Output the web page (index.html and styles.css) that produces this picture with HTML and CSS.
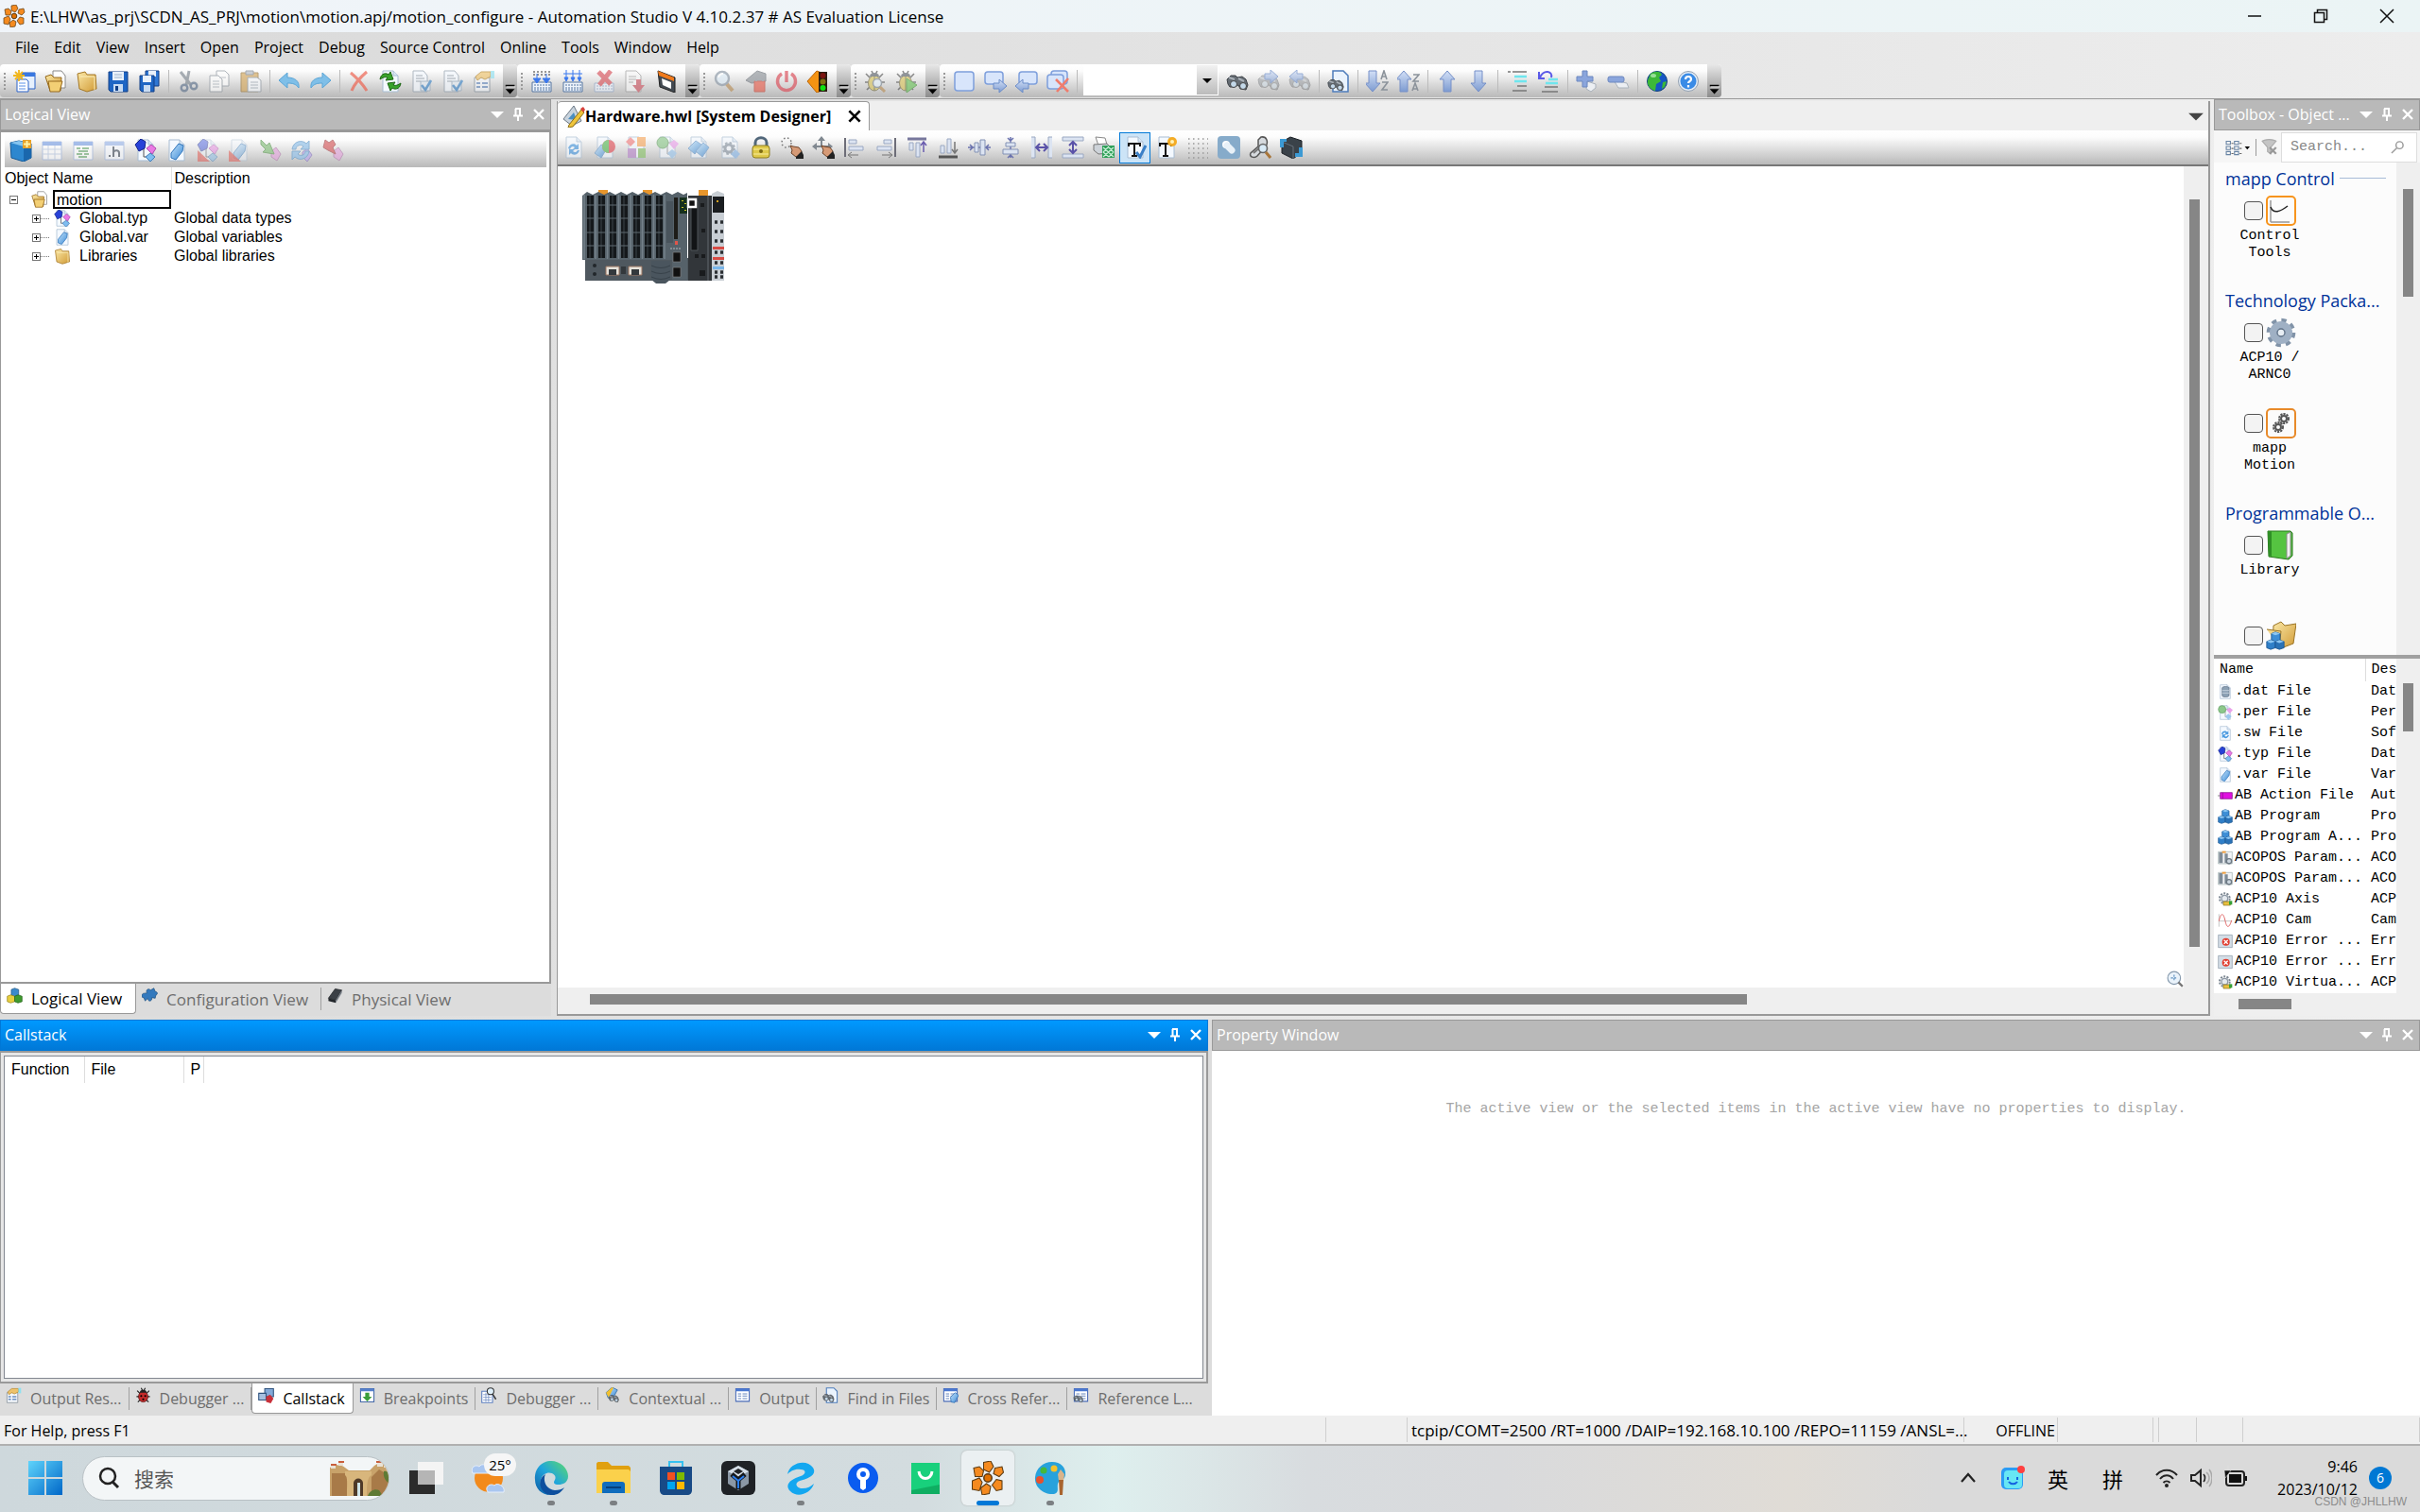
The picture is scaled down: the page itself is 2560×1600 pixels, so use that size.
FILE: index.html
```html
<!DOCTYPE html>
<html lang="en">
<head>
    <meta charset="UTF-8">
    <meta name="viewport" content="width=device-width, initial-scale=1.0">
    <title>motion - Automation Studio</title>
    <link rel="stylesheet" href="styles.css">
</head>
<body>
    <!-- Icon sprite -->
    <svg class="sprite" aria-hidden="true">
        <defs>
            <linearGradient id="gFolder" x1="0" y1="0" x2="1" y2="1"><stop offset="0" stop-color="#fbe9a8"/><stop offset="1" stop-color="#d19a35"/></linearGradient>
            <linearGradient id="gBlue" x1="0" y1="0" x2="1" y2="1"><stop offset="0" stop-color="#c5e4fb"/><stop offset="1" stop-color="#3b8ad6"/></linearGradient>
            <linearGradient id="gSteel" x1="0" y1="0" x2="0" y2="1"><stop offset="0" stop-color="#d3e0f7"/><stop offset="1" stop-color="#7d9bd0"/></linearGradient>
            <linearGradient id="gWin" x1="0" y1="0" x2="1" y2="1"><stop offset="0" stop-color="#5fd4fb"/><stop offset="1" stop-color="#0067c8"/></linearGradient>
            <linearGradient id="gEdge" x1="0" y1="1" x2="1" y2="0"><stop offset="0" stop-color="#0c59a4"/><stop offset=".5" stop-color="#1fa5dc"/><stop offset="1" stop-color="#5fdc6a"/></linearGradient>
        </defs>
        <symbol id="logo" viewBox="0 0 24 24">
            <g fill="#f58a1f" stroke="#5a3a12" stroke-width=".7"><path d="M9 1l5-1 2 4-3 4-4-2zM17 5l5-1 1 4-3 3-4-2zM18 13l4 1v6l-4 1-3-4zM11 16l3 2-1 5-5 1-1-5zM1 14l5-2 2 3-2 6-5-1zM2 5l4-1 3 3-1 4-5 0z"/></g>
            <circle cx="12" cy="12" r="2.800" fill="#e07000" stroke="#5a3a12"/>
        </symbol>
        <symbol id="page" viewBox="0 0 24 24"><path d="M4 1h11l5 5v17H4z" fill="#f4f9ff" stroke="#a9bdd2"/><path d="M15 1v5h5" fill="#dbe8f5" stroke="#a9bdd2"/></symbol>
        <symbol id="new" viewBox="0 0 24 24"><path d="M9 3h14v17H9z" fill="#e6f0fd" stroke="#2a62c8"/><path d="M9 3h14v4H9z" fill="#3a78e0"/><path d="M4 10h10l2 2v11H4z" fill="#fff" stroke="#2a62c8"/><path d="M6 14h7M6 17h7M6 20h7" stroke="#5b91e8"/><path d="M6 0v12M0 6h12M2 2l8 8M10 2l-8 8" stroke="#f1b61b" stroke-width="1.8"/></symbol>
        <symbol id="open" viewBox="0 0 24 24"><path d="M9 1h9l4 5v13H9z" fill="#fff" stroke="#888"/><path d="M1 7l6-2 3 3h8l-1 14H6z" fill="url(#gFolder)" stroke="#96681c"/><path d="M4 12h15l-3 11H6z" fill="#f3cf74" stroke="#96681c"/></symbol>
        <symbol id="folder" viewBox="0 0 24 24"><path d="M2 4l8-2 2 3 9 0 1 15-10 3-8-3z" fill="url(#gFolder)" stroke="#a57724"/><path d="M5 7h15v14" fill="none" stroke="#fbeebb"/></symbol>
        <symbol id="save" viewBox="0 0 24 24"><path d="M2 2h20v21H4l-2-2z" fill="#1f66c4" stroke="#123f86"/><path d="M6 2h12v9H6z" fill="#e9f1fa"/><path d="M8 5h8M8 8h8" stroke="#9fb4cc"/><path d="M7 15h10v8H7z" fill="#c9dcf2"/><path d="M9 17h3v5H9z" fill="#123f86"/></symbol>
        <symbol id="saveall" viewBox="0 0 24 24"><path d="M8 1h14v16H8z" fill="#2f77d4" stroke="#123f86"/><path d="M11 1h8v6h-8z" fill="#e9f1fa"/><path d="M2 6h15v17H4l-2-2z" fill="#1f66c4" stroke="#123f86"/><path d="M5 6h9v7H5z" fill="#e9f1fa"/><path d="M6 16h7v7H6z" fill="#c9dcf2"/></symbol>
        <symbol id="cut" viewBox="0 0 24 24"><path d="M4 2l11 14M13 1l-3 15" stroke="#7e8790" stroke-width="3"/><g fill="none" stroke="#5d718c" stroke-width="2.4"><circle cx="8" cy="19" r="3.3"/><circle cx="18" cy="17" r="3.3"/></g></symbol>
        <symbol id="copy" viewBox="0 0 24 24"><path d="M9 1h9l4 4v12H9z" fill="#fff" stroke="#8a939c"/><path d="M2 6h9l4 4v13H2z" fill="#fff" stroke="#8a939c"/><path d="M5 12h7M5 15h7M5 18h7M12 8h7" stroke="#a5adb6"/></symbol>
        <symbol id="paste" viewBox="0 0 24 24"><path d="M2 3h18v20H2z" fill="#d5a85c" stroke="#98763a"/><path d="M7 1h8v4H7z" fill="#b4bac2" stroke="#7a828c"/><path d="M9 8h10l4 3v12H9z" fill="#f7fafd" stroke="#8a939c"/><path d="M12 13h8M12 16h8M12 19h8" stroke="#9aa5b0"/></symbol>
        <symbol id="undo" viewBox="0 0 24 24"><path d="M1 11l9-8v5c8 0 13 4 12 11-3-4-6-5-12-5v5z" fill="#7fbfe8" stroke="#5aa5d6"/></symbol>
        <symbol id="redo" viewBox="0 0 24 24"><path d="M23 11l-9-8v5C6 8 1 12 2 19c3-4 6-5 12-5v5z" fill="#7fbfe8" stroke="#5aa5d6"/></symbol>
        <symbol id="delete" viewBox="0 0 24 24"><path d="M3 3c6 5 12 11 17 19M20 2C13 8 7 14 4 22" fill="none" stroke="#ee5a46" stroke-width="3"/></symbol>
        <symbol id="reload" viewBox="0 0 24 24"><use href="#page"/><path d="M1 10C2 3 8 3 10 5l2-3 3 8-8 1 2-3c-3-1-5 0-8 2z" fill="#38a32b" stroke="#1c6413"/><path d="M23 14c-1 7-7 7-9 5l-2 3-3-8 8-1-2 3c3 1 5 0 8-2z" fill="#38a32b" stroke="#1c6413"/></symbol>
        <symbol id="check" viewBox="0 0 24 24"><path d="M3 1h11l4 5v17H3z" fill="#f4f9ff" stroke="#8a98a6"/><path d="M6 6h7M6 9h9M6 12h5" stroke="#7f8a95"/><path d="M11 12h10v10H11z" fill="#e3ebf3" stroke="#8fa4b8"/><path d="M12 16l4 5 6-10" fill="none" stroke="#3f86c6" stroke-width="2.6"/></symbol>
        <symbol id="props" viewBox="0 0 24 24"><path d="M2 8h16v15H2z" fill="#f3f6fa" stroke="#7d8894"/><path d="M4 14h4M10 14h6M4 18h4M10 18h6" stroke="#6a8ec0" stroke-width="2"/><path d="M3 7l6-5h10v5l-6 3-4-2-4 3z" fill="#edc26b" stroke="#b58629"/><path d="M19 1h4v8h-4z" fill="#8fe0f0"/></symbol>
        <symbol id="build" viewBox="0 0 24 24"><path d="M2 13h20v10H2z" fill="#eef4fc" stroke="#54749f"/><path d="M4 16h17M4 19h17M4 21h17" stroke="#54749f" stroke-dasharray="2 1"/><path d="M3 2h18M3 5h18" stroke="#333" stroke-dasharray="2 2"/><path d="M7 4v7M17 4v7M3 9l4 5 4-5zM13 9l4 5 4-5z" fill="#3b78ee" stroke="#3b78ee"/></symbol>
        <symbol id="rebuild" viewBox="0 0 24 24"><path d="M2 13h20v10H2z" fill="#eef4fc" stroke="#54749f"/><path d="M4 16h17M4 19h17M4 21h17" stroke="#54749f" stroke-dasharray="2 1"/><path d="M2 4h20M5 0v10M12 0v10M19 0v10M3 8l2 4 2-4zM10 8l2 4 2-4zM17 8l2 4 2-4z" fill="#3b78ee" stroke="#3b78ee"/></symbol>
        <symbol id="stopbuild" viewBox="0 0 24 24"><path d="M2 14h20v9H2z" fill="#eef4fc" stroke="#8fa4c4"/><path d="M4 17h17M4 20h17" stroke="#8fa4c4" stroke-dasharray="2 1"/><path d="M6 2l13 13M19 1L7 16" stroke="#d8535c" stroke-width="5"/></symbol>
        <symbol id="transfer" viewBox="0 0 24 24"><path d="M2 1h11l5 5v17H2z" fill="#f7f7f7" stroke="#999"/><path d="M5 7h8M5 10h8M5 13h5" stroke="#999"/><path d="M13 10h5v6h4l-6.500 8L9 16h4z" fill="#cd5a66"/></symbol>
        <symbol id="panel" viewBox="0 0 24 24"><path d="M3 1l18 7v16L5 18z" fill="#434a52" stroke="#222"/><path d="M3 1l17 7v4L4 6z" fill="#f07a1c"/><path d="M7 9l10 4v7L8 16z" fill="#fff"/></symbol>
        <symbol id="magnify" viewBox="0 0 24 24"><path d="M14 14l7 8" stroke="#b9905a" stroke-width="4"/><circle cx="10" cy="9" r="7" fill="#dcebf6" stroke="#8a97a5" stroke-width="2.4"/><path d="M6 8a5 5 0 0 1 5-4" fill="none" stroke="#fff" stroke-width="2"/></symbol>
        <symbol id="unlock" viewBox="0 0 24 24"><path d="M2 11L14 1l9 3v8L8 14z" fill="#8e949a" stroke="#6c727a"/><path d="M11 12h11v11H11z" fill="#e8604f" stroke="#c2483b"/><path d="M13 12V9c0-4 7-4 7 0v3" fill="none" stroke="#8d9299" stroke-width="2"/></symbol>
        <symbol id="power" viewBox="0 0 24 24"><path d="M7 4a9.500 9.500 0 1 0 10 0" fill="none" stroke="#db4a56" stroke-width="3.400"/><path d="M12 1v12" stroke="#db4a56" stroke-width="3.400"/></symbol>
        <symbol id="traffic" viewBox="0 0 24 24"><path d="M1 12L11 1l5 2v19l-5 2z" fill="#f59312" stroke="#b9650a"/><path d="M13 2h9v21h-9z" fill="#2b1c10"/><circle cx="17.500" cy="6" r="3" fill="#7b1410"/><circle cx="17.500" cy="12.500" r="3" fill="#847410"/><circle cx="17.500" cy="19" r="3" fill="#12e212"/></symbol>
        <symbol id="bug" viewBox="0 0 24 24"><path d="M2 4l5 5M20 4l-5 5M1 13h21M3 21l5-5M19 21l-5-5M8 1l2 4M14 1l-2 4" stroke="#555" stroke-width="1.600"/><ellipse cx="11" cy="14" rx="6.500" ry="8" fill="#d9c560" stroke="#77704a"/><path d="M6 7a5 4 0 0 1 10 0z" fill="#5b6269"/><path d="M11 7v15" stroke="#6b6a45"/></symbol>
        <symbol id="bugfind" viewBox="0 0 24 24"><use href="#bug"/><circle cx="14" cy="14" r="4.500" fill="#e2eff8" stroke="#7f8a94" stroke-width="1.500"/><path d="M17 18l5 5" stroke="#b9905a" stroke-width="3"/></symbol>
        <symbol id="bugrun" viewBox="0 0 24 24"><use href="#bug"/><path d="M12 9l11 7-11 8z" fill="#6ec45e" stroke="#4c9a40"/></symbol>
        <symbol id="bm" viewBox="0 0 24 24"><rect x="2" y="2" width="20" height="20" rx="3" fill="#d8e5fb" stroke="#7e9fdc" stroke-width="1.500"/></symbol>
        <symbol id="bmnext" viewBox="0 0 24 24"><rect x="1" y="2" width="19" height="13" rx="3" fill="#d8e5fb" stroke="#7e9fdc" stroke-width="1.500"/><path d="M10 14h6v-4l8 7-8 7v-4h-6z" fill="url(#gSteel)" stroke="#6b8cc8"/></symbol>
        <symbol id="bmprev" viewBox="0 0 24 24"><rect x="4" y="2" width="19" height="13" rx="3" fill="#d8e5fb" stroke="#7e9fdc" stroke-width="1.500"/><path d="M14 14H8v-4l-8 7 8 7v-4h6z" fill="url(#gSteel)" stroke="#6b8cc8"/></symbol>
        <symbol id="bmclear" viewBox="0 0 24 24"><rect x="5" y="1" width="17" height="14" rx="3" fill="#d8e5fb" stroke="#7e9fdc" stroke-width="1.500"/><rect x="1" y="5" width="17" height="15" rx="3" fill="#d8e5fb" stroke="#7e9fdc" stroke-width="1.500"/><path d="M10 10l13 13M23 9L11 23" stroke="#f07c6c" stroke-width="2.600"/></symbol>
        <symbol id="bino" viewBox="0 0 24 24"><path d="M1 10l4-4 5 0 2 2 5-1 4 3 2 6-2 5-6-1-2-4-4 2-5 0-2-3z" fill="#666d74" stroke="#3c4147"/><path d="M3 8l6 2M13 9l6 3" stroke="#aab1b8" stroke-width="2"/><circle cx="8" cy="15" r="3.500" fill="#c4d9ea" stroke="#444"/><circle cx="18" cy="17" r="3.500" fill="#c4d9ea" stroke="#444"/></symbol>
        <symbol id="binonext" viewBox="0 0 24 24"><use href="#bino" opacity=".5"/><path d="M8 4h6V0l8 7-8 7v-4H8z" fill="url(#gSteel)" stroke="#6b8cc8"/></symbol>
        <symbol id="binoprev" viewBox="0 0 24 24"><use href="#bino" opacity=".5"/><path d="M15 4H9V0L1 7l8 7v-4h6z" fill="url(#gSteel)" stroke="#6b8cc8"/></symbol>
        <symbol id="binopage" viewBox="0 0 24 24"><path d="M6 1h11l5 5v17H6z" fill="#eaf3fd" stroke="#4e7cba" stroke-width="1.500"/><use href="#bino" x="0" y="6" width="18" height="18"/></symbol>
        <symbol id="up" viewBox="0 0 24 24"><path d="M12 1l8 9h-4v13H8V10H4z" fill="url(#gSteel)" stroke="#7690c8"/></symbol>
        <symbol id="down" viewBox="0 0 24 24"><path d="M12 23l8-9h-4V1H8v13H4z" fill="url(#gSteel)" stroke="#7690c8"/></symbol>
        <symbol id="sortdown" viewBox="0 0 24 24"><use href="#down" x="-5"/><path d="M16 10l3-9 3 9M17 7h4M17 13h6l-6 8h6" fill="none" stroke="#8b929a" stroke-width="1.600"/></symbol>
        <symbol id="sortup" viewBox="0 0 24 24"><use href="#up" x="-5"/><path d="M16 22l3-8 3 8M17 20h4M17 5h6l-6 7h6" fill="none" stroke="#8b929a" stroke-width="1.600"/></symbol>
        <symbol id="indent" viewBox="0 0 24 24"><path d="M2 2h3M7 2h15M12 17h10M7 22h15" stroke="#777" stroke-width="1.600"/><path d="M9 7h13M9 12h13" stroke="#6fe6ee" stroke-width="2.400"/></symbol>
        <symbol id="outdent" viewBox="0 0 24 24"><path d="M8 18h14M5 23h17" stroke="#777" stroke-width="1.600"/><path d="M12 10h10M9 14h13" stroke="#6fe6ee" stroke-width="2.400"/><path d="M2 2v7h6M3 8c4-9 14-7 12 0" fill="none" stroke="#5a5ae8" stroke-width="2"/></symbol>
        <symbol id="plus" viewBox="0 0 24 24"><path d="M12 12l9 3v4l-5 4-5-3z" fill="#eceff3" stroke="#aab2bb"/><path d="M7 1h5v6h6v5h-6v6H7v-6H1V7h6z" fill="#8aa5dc" stroke="#6d88c0"/></symbol>
        <symbol id="minus" viewBox="0 0 24 24"><path d="M7 11l14 3 2 5H12z" fill="#eceff3" stroke="#aab2bb"/><rect x="1" y="7" width="17" height="6" rx="2" fill="#8aa5dc" stroke="#6d88c0"/></symbol>
        <symbol id="globe" viewBox="0 0 24 24"><circle cx="12" cy="12" r="10.500" fill="#1556c4" stroke="#123f7c"/><path d="M5 4c5-3 10-3 12 1l-3 3 2 4-5 3-1 7c-5-1-9-6-8-11zM18 13l4-1-2 6-3 2z" fill="#3cb838"/><ellipse cx="8" cy="6" rx="3" ry="2" fill="#bff0c0" opacity=".7"/></symbol>
        <symbol id="help" viewBox="0 0 24 24"><circle cx="12" cy="12" r="10.500" fill="#e4ecf5" stroke="#93a1b2"/><circle cx="12" cy="12" r="8.500" fill="#3a8be6"/><path d="M9 10c0-4 6-4 6 0 0 2-3 2-3 4M12 16v2.500" fill="none" stroke="#fff" stroke-width="2.200"/></symbol>
        <symbol id="cube" viewBox="0 0 24 24"><path d="M1 4l9-2 13 3v15l-8 4L2 20z" fill="#2d87cf" stroke="#175a96"/><path d="M15 8v16l8-4V5z" fill="#1a67ad"/><path d="M1 4l9-2 13 3-8 3z" fill="#85c4ef"/><path d="M14 1h9v9h-9z" fill="#e8a22a"/><path d="M18.500 2v7M15 5.500h7" stroke="#fff3a8" stroke-width="2"/></symbol>
        <symbol id="table" viewBox="0 0 24 24"><path d="M2 3h20v19H2z" fill="#fff" stroke="#9db3dc"/><path d="M2 3h20v4H2z" fill="#7ba0e4"/><path d="M2 11h20M2 16h20M8 7v15M15 7v15" stroke="#b9c9e4"/></symbol>
        <symbol id="tablecode" viewBox="0 0 24 24"><path d="M2 3h20v19H2z" fill="#fff" stroke="#9db3dc"/><path d="M2 3h20v4H2z" fill="#7ba0e4"/><path d="M5 10h4M11 10h7M7 13h10M5 16h6M13 16h5M7 19h9" stroke="#4e9a54" stroke-width="1.600"/></symbol>
        <symbol id="header" viewBox="0 0 24 24"><path d="M2 3h20v19H2z" fill="#f7faff" stroke="#9db3dc"/><path d="M2 3h20v4H2z" fill="#9bb6e8"/><path d="M6 18h2M11 8v11M11 14c2-3 6-2 6 1v4" fill="none" stroke="#4a5360" stroke-width="2"/></symbol>
        <symbol id="types" viewBox="0 0 24 24"><use href="#page"/><path d="M10 7v12h6" fill="none" stroke="#555"/><path d="M1 6l6-6 5 3-1 7-6 3z" fill="#2842d8" stroke="#16258c"/><path d="M13 10l5-4 5 4-4 6z" fill="#ea7ae4" stroke="#b14cb0"/><path d="M12 19l5-4 5 4-5 5z" fill="#7fbdf0" stroke="#447fb8"/></symbol>
        <symbol id="var" viewBox="0 0 24 24"><use href="#page"/><path d="M6 15l8-10 5 2-1 6-7 9-5-2z" fill="url(#gBlue)" stroke="#2f74ba"/></symbol>
        <symbol id="typesred" viewBox="0 0 24 24"><use href="#types" opacity=".65"/><path d="M1 12l13 12H1z" fill="#e2574f" opacity=".8"/></symbol>
        <symbol id="varred" viewBox="0 0 24 24"><use href="#var" opacity=".65"/><path d="M1 12l13 12H1z" fill="#e2574f" opacity=".8"/></symbol>
        <symbol id="import" viewBox="0 0 24 24"><path d="M13 13l5-4 5 7-4 7-6-4z" fill="#e3a6dc" stroke="#b583b0"/><path d="M2 1l6 6 3-3 5 12-12-2 3-3-5-5z" fill="#86c07c" stroke="#5f9a56"/></symbol>
        <symbol id="sync" viewBox="0 0 24 24"><path d="M13 14l5-4 5 7-5 7-5-5z" fill="#b9a6ea" stroke="#8b7cc0"/><path d="M2 11C3 3 12 0 17 5l3-3v9h-9l3-3C11 5 6 7 6 11zM20 13c-1 8-10 11-15 6l-3 3v-9h9l-3 3c3 3 8 1 8-3z" fill="#8fc0ea" stroke="#629aca"/></symbol>
        <symbol id="export" viewBox="0 0 24 24"><path d="M13 13l5-4 5 7-4 7-6-4z" fill="#e3a6dc" stroke="#b583b0"/><path d="M2 9L4 1l4 3 4-3 3 5-3 3 3 7-8-4z" fill="#d6595c" stroke="#a84a4e"/></symbol>
        <symbol id="syncpage" viewBox="0 0 24 24"><use href="#page"/><path d="M6 13c1-5 7-6 9-3l2-2v6h-6l2-2c-2-2-4-1-5 2zM18 15c-1 5-7 6-9 3l-2 2v-6h6l-2 2c2 2 4 1 5-1z" fill="#4d9be0"/></symbol>
        <symbol id="ballpage" viewBox="0 0 24 24"><use href="#page"/><path d="M1 18l7-9 6 4-6 10z" fill="url(#gBlue)" stroke="#6d9ccc"/><circle cx="16" cy="11" r="7" fill="#e0525a"/><path d="M16 4a7 7 0 0 0 0 14z" fill="#5cba58"/></symbol>
        <symbol id="blocks" viewBox="0 0 24 24"><use href="#page"/><path d="M1 6l5-5 5 5-5 5z" fill="#f08080"/><path d="M13 1h9v10h-9z" fill="#f6a860"/><path d="M3 13h9v10H3z" fill="#b98acb"/><path d="M14 13h8v10h-8z" fill="#8cc36c"/></symbol>
        <symbol id="netpage" viewBox="0 0 24 24"><use href="#page"/><path d="M9 7h9M12 7v12h5" fill="none" stroke="#888"/><circle cx="7" cy="7" r="6" fill="#8cc78a" stroke="#6aa368"/><path d="M14 8l5-4 5 4-5 6z" fill="#e9a2ea"/><path d="M12 18l5-4 5 4-5 6z" fill="#9ec8ee"/></symbol>
        <symbol id="diamonds" viewBox="0 0 24 24"><use href="#page"/><path d="M1 13l8-8 6 4-7 10z" fill="url(#gBlue)" stroke="#6d9ccc"/><path d="M9 16l8-9 6 5-7 10z" fill="url(#gBlue)" stroke="#6d9ccc"/></symbol>
        <symbol id="gearpage" viewBox="0 0 24 24"><use href="#page"/><circle cx="11" cy="13" r="4" fill="none" stroke="#8d99a6" stroke-width="3"/><circle cx="11" cy="13" r="6" fill="none" stroke="#8d99a6" stroke-width="2" stroke-dasharray="2.500 2.200"/><path d="M13 19l5-5 5 5-5 5z" fill="#8db9e8"/></symbol>
        <symbol id="lock" viewBox="0 0 24 24"><path d="M6 12V7c0-7 12-7 12 0v5" fill="none" stroke="#51677a" stroke-width="3"/><rect x="3" y="10" width="18" height="13" rx="3" fill="#dfc94a" stroke="#8e7d20"/><path d="M4 14h16M4 19h16" stroke="#f7eca0"/><circle cx="12" cy="16" r="2" fill="#7c6a14"/></symbol>
        <symbol id="hand" viewBox="0 0 24 24"><path d="M10 10l3 1 6 1 3 4-1 5-5 1-5-4 1-3z" fill="#d69a76" stroke="#6e4429"/><path d="M16 22l6-6 2 4v4h-8z" fill="#222"/></symbol>
        <symbol id="select" viewBox="0 0 24 24"><circle cx="6" cy="7" r="5" fill="none" stroke="#777" stroke-dasharray="1.500 2.500" stroke-width="1.500"/><use href="#hand"/></symbol>
        <symbol id="move" viewBox="0 0 24 24"><path d="M10 0l4 5h-3v5h6V7l5 4-5 4v-3H5v3L0 11l5-4v3h4V5H6z" fill="#808890"/><use href="#hand"/></symbol>
        <symbol id="alleft" viewBox="0 0 24 24"><path d="M2 2v20" stroke="#6d6d78" stroke-width="2"/><path d="M6 4h8v4H6zM6 11h15v4H6z" fill="#dce4f2" stroke="#9aa8c2"/><path d="M16 20H6M9 17l-4 3 4 3" fill="none" stroke="#777"/></symbol>
        <symbol id="alright" viewBox="0 0 24 24"><path d="M22 2v20" stroke="#6d6d78" stroke-width="2"/><path d="M10 4h8v4h-8zM3 11h15v4H3z" fill="#dce4f2" stroke="#9aa8c2"/><path d="M8 20h10M15 17l4 3-4 3" fill="none" stroke="#777"/></symbol>
        <symbol id="altop" viewBox="0 0 24 24"><path d="M2 3h20" stroke="#77779c" stroke-width="3"/><path d="M4 7h4v8H4zM11 7h4v15h-4z" fill="#dce4f2" stroke="#9aa8c2"/><path d="M19 17V7M16 10l3-4 3 4" fill="none" stroke="#6a5cae" stroke-width="1.500"/></symbol>
        <symbol id="albottom" viewBox="0 0 24 24"><path d="M2 22h20" stroke="#555" stroke-width="3"/><path d="M4 10h4v8H4zM11 3h4v15h-4z" fill="#dce4f2" stroke="#9aa8c2"/><path d="M19 6v11M16 14l3 4 3-4" fill="none" stroke="#777" stroke-width="1.500"/></symbol>
        <symbol id="cenh" viewBox="0 0 24 24"><path d="M0 12h24M2 9l3 3-3 3M22 9l-3 3 3 3" fill="none" stroke="#6a72ae" stroke-width="1.500"/><path d="M7 7h4v10H7zM13 4h5v16h-5z" fill="#dce4f2" stroke="#8291b4"/></symbol>
        <symbol id="cenv" viewBox="0 0 24 24"><path d="M12 1v22M9 2l3 3 3-3M9 23l3-3 3 3" fill="none" stroke="#6a72ae" stroke-width="1.500"/><path d="M7 7h10v4H7zM4 14h16v5H4z" fill="#dce4f2" stroke="#8291b4"/></symbol>
        <symbol id="spaceh" viewBox="0 0 24 24"><path d="M1 1h4v22H1M23 1h-4v22h4" fill="#dce4f2" stroke="#9aa8c2"/><path d="M7 12h10M10 8l-4 4 4 4M14 8l4 4-4 4" fill="none" stroke="#5a52a8" stroke-width="2"/></symbol>
        <symbol id="spacev" viewBox="0 0 24 24"><path d="M1 1h22v4H1zM1 19h22v4H1z" fill="#dce4f2" stroke="#9aa8c2"/><path d="M12 7v10M8 10l4-4 4 4M8 14l4 4 4-4" fill="none" stroke="#5a52a8" stroke-width="2"/></symbol>
        <symbol id="print" viewBox="0 0 24 24"><path d="M3 1l10 1 2 7-9 1z" fill="#fff" stroke="#888"/><path d="M1 9l14-1 3 3v7l-12 1-5-4z" fill="#cdd3d9" stroke="#777"/><path d="M10 10h13v13H10z" fill="#2f9f58"/><path d="M11 12l11 10M11 17l6 5M16 11l6 6M22 12L11 22M17 11l-6 6M22 17l-5 5" stroke="#c8efd6" stroke-width="1.200"/></symbol>
        <symbol id="textcheck" viewBox="0 0 24 24"><use href="#page"/><path d="M4 7h14v4h-2V9h-4v11h2v2H8v-2h2V9H6v2H4z" fill="#111"/><path d="M13 17l4 5 6-12" fill="none" stroke="#3a80c8" stroke-width="3"/></symbol>
        <symbol id="textnew" viewBox="0 0 24 24"><use href="#page"/><path d="M4 7h14v4h-2V9h-4v11h2v2H8v-2h2V9H6v2H4z" fill="#111"/><circle cx="18" cy="6" r="5" fill="#f4ac25"/><circle cx="18" cy="6" r="2" fill="#fff3b8"/></symbol>
        <symbol id="gridd" viewBox="0 0 24 24"><path d="M2 3h21M2 8h21M2 13h21M2 18h21M2 23h21" stroke="#999" stroke-width="1.500" stroke-dasharray="1.500 3.500"/></symbol>
        <symbol id="clip" viewBox="0 0 24 24"><rect width="24" height="24" rx="4" fill="#86abca"/><circle cx="9" cy="9" r="4" fill="#fff"/><path d="M10 10l5 5" stroke="#e8f1f8" stroke-width="7" stroke-linecap="round"/></symbol>
        <symbol id="findgear" viewBox="0 0 24 24"><path d="M13 1c6-1 8 5 5 10L9 21c-3 3-9 1-7-3l8-7V4z" fill="#d6dade" stroke="#555" stroke-width="1.500"/><path d="M5 18l9-8" stroke="#777" stroke-width="2"/><circle cx="15" cy="13" r="4.500" fill="#d8eaf6" stroke="#666" stroke-width="1.600"/><path d="M18 17l5 6" stroke="#a9763a" stroke-width="3"/></symbol>
        <symbol id="hw" viewBox="0 0 24 24"><path d="M2 6l9-5 12 4v12l-9 7L2 18z" fill="#3a4249" stroke="#1c2126"/><path d="M2 6l12 5v13" fill="none" stroke="#66717b"/><path d="M0 3h7v3H4v6H0zM24 22h-8v-4h4v-6h4z" fill="#3c9ad4"/></symbol>
        <symbol id="designer" viewBox="0 0 24 24"><path d="M1 15L12 1l8 16-10 5z" fill="#c9d4de" stroke="#6b7784"/><path d="M6 15l6-7 3 8z" fill="#4b8ec0"/><path d="M7 21L20 5l3 3L11 23l-5 1z" fill="#efc53c" stroke="#8d6f17"/><path d="M19 4l3-2 2 3-2 3z" fill="#d8423c"/></symbol>
        <symbol id="cubes" viewBox="0 0 24 24"><path d="M7 3l5-2 6 2v8l-6 2-5-2z" fill="#3d8ed6" stroke="#1c5690"/><path d="M1 13l5-2 6 2v8l-6 2-5-2z" fill="#2f7fc8" stroke="#1c5690"/><path d="M12 13l5-2 6 2v8l-6 2-5-2z" fill="#2a72b6" stroke="#1c5690"/><path d="M7 3l5-2 6 2-6 2zM1 13l5-2 6 2-6 2zM12 13l5-2 6 2-6 2z" fill="#8cc6f2"/></symbol>
        <symbol id="cubes3" viewBox="0 0 24 24"><path d="M7 3l5-2 6 2v9l-6 2-5-2z" fill="#3a8acc" stroke="#22567f"/><path d="M1 13l5-2 6 2v8l-6 2-5-2z" fill="#e8cf3e" stroke="#94811c"/><path d="M12 13l5-2 6 2v8l-6 2-5-2z" fill="#3e9a2e" stroke="#24621a"/></symbol>
        <symbol id="puzzle" viewBox="0 0 24 24"><path d="M2 9l6-1c-3-4 2-8 5-4l5-3 2 5c4 0 4 5 1 5l-1 5-5-1c1 6-6 7-6 1l-4 4-2-5c-4 1-4-5-1-6z" fill="#3379bd" stroke="#1d4f80"/></symbol>
        <symbol id="chip" viewBox="0 0 24 24"><path d="M2 16L12 2l10 2-9 15z" fill="#3b4046" stroke="#1c1f22"/><path d="M2 16v4l11 3v-4z" fill="#22262a"/><path d="M13 23l9-15V4l-9 15z" fill="#777e86"/></symbol>
        <symbol id="gear" viewBox="0 0 24 24"><circle cx="12" cy="12" r="10" fill="none" stroke="#8193a8" stroke-width="3" stroke-dasharray="4 3.850"/><circle cx="12" cy="12" r="6" fill="none" stroke="#9fb0c4" stroke-width="6"/><circle cx="12" cy="12" r="3" fill="#e8eef4" stroke="#5e7086"/></symbol>
        <symbol id="curve" viewBox="0 0 32 32"><rect x="1" y="1" width="30" height="30" rx="4" fill="#fbfbfb" stroke="#f7941d" stroke-width="2"/><path d="M5 5v23M5 28h20" stroke="#999" stroke-width="1.500"/><path d="M5 12c3 8 10 5 18-1" fill="none" stroke="#222" stroke-width="1.500"/></symbol>
        <symbol id="motion" viewBox="0 0 32 32"><rect x="1" y="1" width="30" height="30" rx="4" fill="#fbfbfb" stroke="#e88a2a" stroke-width="2"/><g fill="none" stroke="#555"><circle cx="19" cy="11" r="5" stroke-width="2" stroke-dasharray="2.200 1"/><circle cx="19" cy="11" r="3" stroke-width="2"/><circle cx="13" cy="20" r="5" stroke-width="2" stroke-dasharray="2.200 1"/><circle cx="13" cy="20" r="3" stroke-width="2"/></g></symbol>
        <symbol id="book" viewBox="0 0 32 32"><path d="M2 1h24l2 2v24l-4 4-21-3z" fill="#55c441" stroke="#2a7a1e"/><path d="M2 1h4v27l-3-1z" fill="#2f8f26"/><path d="M22 4l4-2v25l-4 3z" fill="#f2f2f2" stroke="#888"/></symbol>
        <symbol id="foldercubes" viewBox="0 0 32 32"><path d="M8 5l8-4 4 4 12-2-3 21-13 5-9-3z" fill="url(#gFolder)" stroke="#9a7426"/><path d="M1 9l15 2-2 17" fill="#f3d588" stroke="#9a7426"/><use href="#cubes" x="0" y="11" width="20" height="20"/></symbol>
        <symbol id="db" viewBox="0 0 24 24"><use href="#page"/><path d="M7 6c0-3 11-3 11 0v12c0 3-11 3-11 0z" fill="#8ba0b4" stroke="#5d7084"/><path d="M7 10h11M7 14h11" stroke="#dde6ee"/></symbol>
        <symbol id="action" viewBox="0 0 24 24"><path d="M0 12h24" stroke="#555"/><path d="M4 7h19v10H4z" fill="#e010e0" stroke="#7a1080"/><path d="M8 7v10" stroke="#7a1080"/></symbol>
        <symbol id="acopos" viewBox="0 0 24 24"><path d="M1 2h22v19H1z" fill="#f2f4f6" stroke="#9aa"/><path d="M2 3h6v17H2zM11 5h5v15h-5z" fill="#7f8b96"/><path d="M7 1h6v3H7z" fill="#f0a040"/><circle cx="18" cy="17" r="4" fill="#ccd6df" stroke="#6c7883" stroke-width="2"/></symbol>
        <symbol id="axis" viewBox="0 0 24 24"><circle cx="11" cy="10" r="8" fill="none" stroke="#7c8792" stroke-width="3" stroke-dasharray="3 2"/><circle cx="11" cy="10" r="5" fill="#e5eaef" stroke="#8f9aa6" stroke-width="2"/><path d="M9 15h11v6H9z" fill="#e8c040" stroke="#8a7020"/><path d="M18 14h5v6h-5z" fill="#35a035"/></symbol>
        <symbol id="cam" viewBox="0 0 24 24"><path d="M2 2v20M2 13h21" stroke="#aaa"/><path d="M2 13c3-14 7-14 10 0s7 9 10-1" fill="none" stroke="#e06464" stroke-width="1.500"/></symbol>
        <symbol id="err" viewBox="0 0 24 24"><path d="M1 2h22v20H1z" fill="#d3dde6" stroke="#8796a5"/><circle cx="13" cy="13" r="6" fill="#e23b2c"/><path d="M10 10l6 6M16 10l-6 6" stroke="#fff" stroke-width="2"/></symbol>
        <symbol id="ladybug" viewBox="0 0 24 24"><path d="M3 5l5 5M21 5l-5 5M2 14h20M4 22l5-5M20 22l-5-5M9 1l2 4M15 1l-2 4" stroke="#222" stroke-width="1.600"/><ellipse cx="12" cy="14" rx="7" ry="8" fill="#c42a2a" stroke="#501010"/><path d="M7 8a5 4 0 0 1 10 0z" fill="#222"/><circle cx="9" cy="13" r="1.500"/><circle cx="15" cy="13" r="1.500"/><circle cx="12" cy="18" r="1.500"/></symbol>
        <symbol id="stack" viewBox="0 0 24 24"><path d="M10 2h13v12H10z" fill="#83a9d8" stroke="#31547f" stroke-width="1.500"/><path d="M1 9h11v10H1z" fill="#a6c0e0" stroke="#31547f" stroke-width="1.500"/><path d="M12 14l6-3 5 6-4 7-7-2z" fill="#c8303a"/></symbol>
        <symbol id="break" viewBox="0 0 24 24"><path d="M2 2h20v20H2z" fill="#fff" stroke="#4468a8" stroke-width="1.500"/><path d="M2 2h20v4H2z" fill="#5580cc"/><path d="M9 8h6v6h4l-7 7-7-7h4z" fill="#3a9e3a"/></symbol>
        <symbol id="watch" viewBox="0 0 24 24"><path d="M1 6h16v17H1z" fill="#fff" stroke="#5c7fc0" stroke-width="1.500"/><path d="M3 11h12M3 15h12M3 19h12M7 8v14M11 8v14" stroke="#6b8ac0"/><circle cx="14" cy="6" r="5" fill="#dff0fb" stroke="#333" stroke-width="1.500"/><path d="M17 10l5 8" stroke="#333" stroke-width="2"/></symbol>
        <symbol id="context" viewBox="0 0 24 24"><path d="M3 8l9-8 8 4-6 11-8 1z" fill="url(#gBlue)" stroke="#24619c"/><path d="M3 8l9-8 2 1-7 14z" fill="#f3c02e"/><use href="#bino" x="6" y="8" width="17" height="16"/></symbol>
        <symbol id="list" viewBox="0 0 24 24"><path d="M2 2h20v19H2z" fill="#fff" stroke="#4a6cb8" stroke-width="1.500"/><path d="M2 2h20v4H2z" fill="#4a78d0"/><path d="M5 10h5M12 10h7M5 13h5M12 13h7M5 17h5M12 17h7" stroke="#6b8ac0" stroke-width="1.500"/></symbol>
        <symbol id="listref" viewBox="0 0 24 24"><use href="#list"/><path d="M12 15l7-7 5 4-6 11-5-1z" fill="url(#gBlue)" stroke="#2468b0"/></symbol>
        <symbol id="listbino" viewBox="0 0 24 24"><use href="#list"/><use href="#bino" x="0" y="9" width="16" height="15"/></symbol>
        <symbol id="pin" viewBox="0 0 16 16"><path d="M5 2h6M5.500 2v7M10 2v7M3 9.500h10M8 10v5" fill="none" stroke="currentColor" stroke-width="2"/></symbol>
        <symbol id="x" viewBox="0 0 16 16"><path d="M3 3l10 10M13 3L3 13" stroke="currentColor" stroke-width="2.400"/></symbol>
        <symbol id="tri" viewBox="0 0 16 16"><path d="M1 5h14l-7 7z" fill="currentColor"/></symbol>
        <symbol id="more" viewBox="0 0 16 16"><path d="M2 2h11v2H2zM2 7h11l-5.500 6z" fill="#000"/><path d="M3 4.500h11" stroke="#fff"/></symbol>
    </svg>

    <div class="app">
        <header class="titlebar">
            <svg class="app-icon"><use href="#logo"/></svg>
            <h1>E:\LHW\as_prj\SCDN_AS_PRJ\motion\motion.apj/motion_configure - Automation Studio V 4.10.2.37 # AS Evaluation License</h1>
            <div class="window-buttons">
                <button aria-label="Minimize"><svg viewBox="0 0 16 16"><path d="M1 8h14" stroke="#111" stroke-width="1.500"/></svg></button>
                <button aria-label="Restore"><svg viewBox="0 0 16 16"><path d="M1.500 4.500h10v10h-10zM4.500 4V1.500h10v10H12" fill="none" stroke="#111" stroke-width="1.500"/></svg></button>
                <button aria-label="Close"><svg viewBox="0 0 16 16"><path d="M1 1l14 14M15 1L1 15" stroke="#111" stroke-width="1.500"/></svg></button>
            </div>
        </header>

        <nav class="menubar">
            <button>File</button><button>Edit</button><button>View</button><button>Insert</button><button>Open</button><button>Project</button><button>Debug</button><button>Source Control</button><button>Online</button><button>Tools</button><button>Window</button><button>Help</button>
        </nav>

        <div class="toolbars">
            <div class="toolbar">
                <button aria-label="New"><svg><use href="#new"/></svg></button>
                <button aria-label="Open project"><svg><use href="#open"/></svg></button>
                <button aria-label="Open file"><svg><use href="#folder"/></svg></button>
                <button aria-label="Save"><svg><use href="#save"/></svg></button>
                <button aria-label="Save all"><svg><use href="#saveall"/></svg></button>
                <i class="sep"></i>
                <button class="dim" aria-label="Cut"><svg><use href="#cut"/></svg></button>
                <button class="dim" aria-label="Copy"><svg><use href="#copy"/></svg></button>
                <button class="dim" aria-label="Paste"><svg><use href="#paste"/></svg></button>
                <i class="sep"></i>
                <button aria-label="Undo"><svg><use href="#undo"/></svg></button>
                <button aria-label="Redo"><svg><use href="#redo"/></svg></button>
                <i class="sep"></i>
                <button class="dim" aria-label="Delete"><svg><use href="#delete"/></svg></button>
                <button aria-label="Refresh"><svg><use href="#reload"/></svg></button>
                <button class="dim" aria-label="Check in"><svg><use href="#check"/></svg></button>
                <button class="dim" aria-label="Check out"><svg><use href="#check"/></svg></button>
                <button class="dim" aria-label="Properties"><svg><use href="#props"/></svg></button>
                <button class="more" aria-label="More"><svg><use href="#more"/></svg></button>
            </div>
            <div class="toolbar">
                <button aria-label="Build"><svg><use href="#build"/></svg></button>
                <button aria-label="Rebuild"><svg><use href="#rebuild"/></svg></button>
                <button class="dim" aria-label="Stop build"><svg><use href="#stopbuild"/></svg></button>
                <button class="dim" aria-label="Transfer"><svg><use href="#transfer"/></svg></button>
                <button aria-label="Simulation"><svg><use href="#panel"/></svg></button>
                <button class="more" aria-label="More"><svg><use href="#more"/></svg></button>
            </div>
            <div class="toolbar">
                <button class="dim" aria-label="Monitor"><svg><use href="#magnify"/></svg></button>
                <button class="dim" aria-label="Force"><svg><use href="#unlock"/></svg></button>
                <button class="dim" aria-label="Restart"><svg><use href="#power"/></svg></button>
                <button aria-label="Target"><svg><use href="#traffic"/></svg></button>
                <button class="more" aria-label="More"><svg><use href="#more"/></svg></button>
            </div>
            <div class="toolbar">
                <button class="dim" aria-label="Debugger"><svg><use href="#bugfind"/></svg></button>
                <button class="dim" aria-label="Start debugger"><svg><use href="#bugrun"/></svg></button>
                <button class="more" aria-label="More"><svg><use href="#more"/></svg></button>
            </div>
            <div class="toolbar">
                <button aria-label="Bookmark"><svg><use href="#bm"/></svg></button>
                <button aria-label="Next bookmark"><svg><use href="#bmnext"/></svg></button>
                <button aria-label="Previous bookmark"><svg><use href="#bmprev"/></svg></button>
                <button aria-label="Clear bookmarks"><svg><use href="#bmclear"/></svg></button>
                <i class="sep"></i>
                <span class="combo"><select aria-label="Find"><option></option></select></span>
                <button aria-label="Find"><svg><use href="#bino"/></svg></button>
                <button class="dim" aria-label="Find next"><svg><use href="#binonext"/></svg></button>
                <button class="dim" aria-label="Find previous"><svg><use href="#binoprev"/></svg></button>
                <i class="sep"></i>
                <button aria-label="Find in files"><svg><use href="#binopage"/></svg></button>
                <i class="sep"></i>
                <button aria-label="Sort ascending"><svg><use href="#sortdown"/></svg></button>
                <button aria-label="Sort descending"><svg><use href="#sortup"/></svg></button>
                <i class="sep"></i>
                <button aria-label="Move up"><svg><use href="#up"/></svg></button>
                <button aria-label="Move down"><svg><use href="#down"/></svg></button>
                <i class="sep"></i>
                <button aria-label="Indent"><svg><use href="#indent"/></svg></button>
                <button aria-label="Unindent"><svg><use href="#outdent"/></svg></button>
                <i class="sep"></i>
                <button aria-label="Expand"><svg><use href="#plus"/></svg></button>
                <button aria-label="Collapse"><svg><use href="#minus"/></svg></button>
                <i class="sep"></i>
                <button aria-label="Web"><svg><use href="#globe"/></svg></button>
                <button aria-label="Help"><svg><use href="#help"/></svg></button>
                <button class="more" aria-label="More"><svg><use href="#more"/></svg></button>
            </div>
        </div>

        <main class="workspace">
            <section class="logical">
                <div class="panel-title"><h2>Logical View</h2><svg><use href="#tri"/></svg><svg><use href="#pin"/></svg><svg><use href="#x"/></svg></div>
                <div class="panel-frame">
                    <div class="strip">
                        <button aria-label="Add object"><svg><use href="#cube"/></svg></button>
                        <button class="dim" aria-label="Open as table"><svg><use href="#table"/></svg></button>
                        <button class="dim" aria-label="Open as text"><svg><use href="#tablecode"/></svg></button>
                        <button class="dim" aria-label="Open header"><svg><use href="#header"/></svg></button>
                        <button aria-label="Data types"><svg><use href="#types"/></svg></button>
                        <button aria-label="Variables"><svg><use href="#var"/></svg></button>
                        <button class="dim" aria-label="Local types"><svg><use href="#typesred"/></svg></button>
                        <button class="dim" aria-label="Local variables"><svg><use href="#varred"/></svg></button>
                        <button class="dim" aria-label="Import"><svg><use href="#import"/></svg></button>
                        <button class="dim" aria-label="Synchronize"><svg><use href="#sync"/></svg></button>
                        <button class="dim" aria-label="Export"><svg><use href="#export"/></svg></button>
                    </div>
                    <table class="tree">
                        <thead><tr><th>Object Name</th><th>Description</th></tr></thead>
                        <tbody>
                            <tr><td><div class="node root"><i class="box minus"></i><svg><use href="#open"/></svg><span class="editing">motion</span></div></td><td></td></tr>
                            <tr><td><div class="node"><i class="box"></i><i class="dots"></i><svg><use href="#types"/></svg><span>Global.typ</span></div></td><td>Global data types</td></tr>
                            <tr><td><div class="node"><i class="box"></i><i class="dots"></i><svg><use href="#var"/></svg><span>Global.var</span></div></td><td>Global variables</td></tr>
                            <tr><td><div class="node"><i class="box"></i><i class="dots"></i><svg><use href="#folder"/></svg><span>Libraries</span></div></td><td>Global libraries</td></tr>
                        </tbody>
                    </table>
                </div>
                <div class="tabs">
                    <button class="tab active"><svg><use href="#cubes3"/></svg>Logical View</button>
                    <button class="tab"><svg><use href="#puzzle"/></svg>Configuration View</button>
                    <button class="tab last"><svg><use href="#chip"/></svg>Physical View</button>
                </div>
            </section>

            <section class="designer">
                <div class="doc-tabs">
                    <button class="doc-tab"><svg><use href="#designer"/></svg>Hardware.hwl [System Designer]<svg class="doc-close"><use href="#x"/></svg></button>
                    <svg class="doc-menu"><use href="#tri"/></svg>
                </div>
                <div class="strip">
                    <button class="dim" aria-label="Software"><svg><use href="#syncpage"/></svg></button>
                    <button class="dim" aria-label="I/O mapping"><svg><use href="#ballpage"/></svg></button>
                    <button class="dim" aria-label="Modules"><svg><use href="#blocks"/></svg></button>
                    <button class="dim" aria-label="Network"><svg><use href="#netpage"/></svg></button>
                    <button class="dim" aria-label="Mapping"><svg><use href="#diamonds"/></svg></button>
                    <button class="dim" aria-label="Configuration"><svg><use href="#gearpage"/></svg></button>
                    <button aria-label="Lock"><svg><use href="#lock"/></svg></button>
                    <button aria-label="Select"><svg><use href="#select"/></svg></button>
                    <button aria-label="Move"><svg><use href="#move"/></svg></button>
                    <button aria-label="Align left"><svg><use href="#alleft"/></svg></button>
                    <button aria-label="Align right"><svg><use href="#alright"/></svg></button>
                    <button aria-label="Align top"><svg><use href="#altop"/></svg></button>
                    <button aria-label="Align bottom"><svg><use href="#albottom"/></svg></button>
                    <button aria-label="Center horizontally"><svg><use href="#cenh"/></svg></button>
                    <button aria-label="Center vertically"><svg><use href="#cenv"/></svg></button>
                    <button aria-label="Space horizontally"><svg><use href="#spaceh"/></svg></button>
                    <button aria-label="Space vertically"><svg><use href="#spacev"/></svg></button>
                    <button aria-label="Print grid"><svg><use href="#print"/></svg></button>
                    <button class="on" aria-label="Show text"><svg><use href="#textcheck"/></svg></button>
                    <button aria-label="New text"><svg><use href="#textnew"/></svg></button>
                    <button aria-label="Grid"><svg><use href="#gridd"/></svg></button>
                    <button aria-label="Attach"><svg><use href="#clip"/></svg></button>
                    <button aria-label="Search"><svg><use href="#findgear"/></svg></button>
                    <button aria-label="Hardware"><svg><use href="#hw"/></svg></button>
                </div>
                <div class="canvas-area">
                    <div class="canvas">
                        <svg class="plc" viewBox="0 0 150 100">
                            <path d="M17 0h10v6H17zM64 0h10v6H64zM123 0h10v6h-10z" fill="#e8962c"/>
                            <path d="M3 72h135v24H3z" fill="#4f585f"/>
                            <path d="M0 6l5-4 6 3 6-3 6 3 6-3 6 3 6-3 6 3 6-3 6 3 6-3 6 3 6-3 6 3 6-3 6 3 6-3 6 3 4-2v92H95V74H0z" fill="#56626a"/>
                            <path d="M5 6h7v66H5zM17 6h7v66h-7zM29 6h7v66h-7zM41 6h7v66h-7zM54 6h7v66h-7zM66 6h7v66h-7zM78 6h7v66h-7z" fill="#14181b"/>
                            <path d="M8 6v66M20 6v66M32 6v66M44 6v66M57 6v66M69 6v66M81 6v66" stroke="#3c454b"/>
                            <path d="M2 16h84M2 30h84M2 45h84M2 59h84" stroke="#5f6b73"/>
                            <path d="M2 5v68M14 5v68M26.500 5v68M38.500 5v68M51 5v68M63.500 5v68M75.500 5v68M87 5v68" stroke="#74818a" stroke-width="1.500"/>
                            <path d="M89 12h7v44h-7z" fill="#49545c"/>
                            <path d="M97 8h4v44h-4z" fill="#1d1c18"/>
                            <path d="M103 8h8v17h-8z" fill="#16301c"/>
                            <path d="M105 11h2v1h-2zM108 14h2v1h-2zM105 18h2v1h-2zM108 21h2v1h-2z" fill="#c9c227"/>
                            <path d="M98 54h3v4h-3z" fill="#e0554a"/>
                            <path d="M93 62h12" stroke="#aeb7bd" stroke-dasharray="2 1"/>
                            <path d="M96 66h8v10h-8zM96 82h8v10h-8z" fill="#111" stroke="#888" stroke-width=".6"/>
                            <path d="M112 6h25v90h-25z" fill="#32363a"/>
                            <path d="M115 12h7v52h-7z" fill="#121416" stroke="#4e5459"/>
                            <path d="M125 14h4v4h-4zM126 41h4v4h-4zM119 68h4v4h-4zM126 68h4v4h-4zM124 85h6v6h-6z" fill="#191b1d"/>
                            <path d="M133 6v90" stroke="#4a4f54" stroke-width="2"/>
                            <path d="M25 81h14v9H25zM49 81h14v9H49z" fill="#e6e2da" stroke="#9a7460"/>
                            <path d="M28 84h8v6h-8zM52 84h8v6h-8zM41 81h5v8h-5z" fill="#33383c"/>
                            <circle cx="13" cy="80" r="2" fill="#22272b"/><circle cx="13" cy="89" r="2" fill="#22272b"/>
                            <path d="M73 75h20v20l-5 4H78l-5-4z" fill="#4a555e"/>
                            <path d="M73 80q10 5 20 0M73 86q10 5 20 0M73 92q10 5 20 0" fill="none" stroke="#38424a"/>
                            <path d="M137 4l6-3 7 3v92h-13z" fill="#c8ced4"/>
                            <path d="M138 7h12v17h-12z" fill="#1a1d20"/>
                            <path d="M142 11h2v2h-2z" fill="#d6a21e"/>
                            <path d="M140 34h3M146 34h3M140 44h3M146 44h3M140 54h3M146 54h3M140 66h3M146 66h3M140 77h3M146 77h3M140 87h3M146 87h3M140 92h3M146 92h3" stroke="#2b2f33" stroke-width="3.500"/>
                            <path d="M138 60h12v3h-12zM138 71h12v3h-12z" fill="#d84b44"/>
                            <path d="M138 81h12v3h-12z" fill="#79b6ea"/>
                            <path d="M112 10h8v8h-8z" fill="#111" stroke="#fff" stroke-width="2.500"/>
                        </svg>
                        <svg class="zoomfit" viewBox="0 0 16 16"><circle cx="7" cy="7" r="6" fill="#eaf3fb" stroke="#8498ac"/><path d="M4 7h6M7 4v6" stroke="#5b8fc0" stroke-dasharray="2 1"/><path d="M11 11l4 4" stroke="#777" stroke-width="2"/></svg>
                    </div>
                    <div class="vscroll"><i></i></div>
                    <div class="hscroll"><i></i></div>
                </div>
            </section>

            <aside class="toolbox">
                <div class="panel-title"><h2>Toolbox - Object ...</h2><svg><use href="#tri"/></svg><svg><use href="#pin"/></svg><svg><use href="#x"/></svg></div>
                <div class="toolbox-bar">
                    <button class="view-mode" aria-label="View mode"><svg viewBox="0 0 24 16"><path d="M1 2h4v3H1zM1 7h4v3H1zM1 12h4v3H1zM9 2h4v3H9zM9 7h4v3H9zM9 12h4v3H9z" fill="none" stroke="#6884a4"/><path d="M6 4h2M6 9h2M6 14h2M14 4h2M14 9h2M14 14h2" stroke="#666"/><path d="M19 7h5l-2.500 3z"/></svg></button>
                    <button class="filter" aria-label="Clear filter"><svg viewBox="0 0 16 16"><path d="M1 2c3-2 10-2 13 0L9 8v6l-3-2V8z" fill="#c4c4c4" stroke="#aaa"/><path d="M8 8l6 6M14 8l-6 6" stroke="#999" stroke-width="2"/></svg></button>
                    <label class="search"><input type="text" placeholder="Search..." aria-label="Search toolbox"><svg viewBox="0 0 16 16"><circle cx="10" cy="6" r="4" fill="none" stroke="#999" stroke-width="1.500"/><path d="M7 9l-6 6" stroke="#999" stroke-width="1.500"/></svg></label>
                </div>
                <div class="scroll-row categories">
                    <div class="cat-list">
                        <h3 class="ruled">mapp Control</h3>
                        <label class="item"><span><input type="checkbox"><svg><use href="#curve"/></svg></span>Control<br>Tools</label>
                        <h3>Technology Packa...</h3>
                        <label class="item"><span><input type="checkbox"><svg><use href="#gear"/></svg></span>ACP10 /<br>ARNC0</label>
                        <label class="item"><span><input type="checkbox"><svg><use href="#motion"/></svg></span>mapp<br>Motion</label>
                        <h3>Programmable O...</h3>
                        <label class="item"><span><input type="checkbox"><svg><use href="#book"/></svg></span>Library</label>
                        <label class="item"><span><input type="checkbox" aria-label="Program"><svg><use href="#foldercubes"/></svg></span></label>
                    </div>
                    <div class="vscroll"><i></i></div>
                </div>
                <div class="scroll-row objects">
                    <table class="object-list">
                        <thead><tr><th>Name</th><th>Des</th></tr></thead>
                        <tbody>
                            <tr><td><svg><use href="#db"/></svg>.dat File</td><td>Dat</td></tr>
                            <tr><td><svg><use href="#netpage"/></svg>.per File</td><td>Per</td></tr>
                            <tr><td><svg><use href="#syncpage"/></svg>.sw File</td><td>Sof</td></tr>
                            <tr><td><svg><use href="#types"/></svg>.typ File</td><td>Dat</td></tr>
                            <tr><td><svg><use href="#var"/></svg>.var File</td><td>Var</td></tr>
                            <tr><td><svg><use href="#action"/></svg>AB Action File</td><td>Aut</td></tr>
                            <tr><td><svg><use href="#cubes"/></svg>AB Program</td><td>Pro</td></tr>
                            <tr><td><svg><use href="#cubes"/></svg>AB Program A...</td><td>Pro</td></tr>
                            <tr><td><svg><use href="#acopos"/></svg>ACOPOS Param...</td><td>ACO</td></tr>
                            <tr><td><svg><use href="#acopos"/></svg>ACOPOS Param...</td><td>ACO</td></tr>
                            <tr><td><svg><use href="#axis"/></svg>ACP10 Axis</td><td>ACP</td></tr>
                            <tr><td><svg><use href="#cam"/></svg>ACP10 Cam</td><td>Cam</td></tr>
                            <tr><td><svg><use href="#err"/></svg>ACP10 Error ...</td><td>Err</td></tr>
                            <tr><td><svg><use href="#err"/></svg>ACP10 Error ...</td><td>Err</td></tr>
                            <tr><td><svg><use href="#axis"/></svg>ACP10 Virtua...</td><td>ACP</td></tr>
                        </tbody>
                    </table>
                    <div class="vscroll"><i></i></div>
                </div>
                <div class="hscroll"><i></i></div>
            </aside>
        </main>

        <div class="lower">
            <section class="callstack">
                <div class="panel-title focused"><h2>Callstack</h2><svg><use href="#tri"/></svg><svg><use href="#pin"/></svg><svg><use href="#x"/></svg></div>
                <div class="panel-frame">
                    <div class="grid-box">
                        <table class="calls"><thead><tr><th>Function</th><th>File</th><th>P</th></tr></thead></table>
                    </div>
                </div>
                <div class="tabs">
                    <button class="tab"><svg><use href="#props"/></svg>Output Res...</button>
                    <button class="tab"><svg><use href="#ladybug"/></svg>Debugger ...</button>
                    <button class="tab active"><svg><use href="#stack"/></svg>Callstack</button>
                    <button class="tab"><svg><use href="#break"/></svg>Breakpoints</button>
                    <button class="tab"><svg><use href="#watch"/></svg>Debugger ...</button>
                    <button class="tab"><svg><use href="#context"/></svg>Contextual ...</button>
                    <button class="tab"><svg><use href="#list"/></svg>Output</button>
                    <button class="tab"><svg><use href="#binopage"/></svg>Find in Files</button>
                    <button class="tab"><svg><use href="#listref"/></svg>Cross Refer...</button>
                    <button class="tab last"><svg><use href="#listbino"/></svg>Reference L...</button>
                </div>
            </section>
            <section class="properties">
                <div class="panel-title"><h2>Property Window</h2><svg><use href="#tri"/></svg><svg><use href="#pin"/></svg><svg><use href="#x"/></svg></div>
                <p>The active view or the selected items in the active view have no properties to display.</p>
            </section>
        </div>

        <footer class="statusbar">
            <span class="hint">For Help, press F1</span>
            <span class="c86"></span>
            <span class="conn">tcpip/COMT=2500 /RT=1000 /DAIP=192.168.10.100 /REPO=11159 /ANSL=...</span>
            <span class="state">OFFLINE</span>
            <span class="c100"></span>
            <span class="c6"></span>
            <span class="c40"></span>
            <span class="c50"></span>
            <span class="rest"></span>
        </footer>

        <div class="taskbar">
            <button class="task" aria-label="Start"><svg viewBox="0 0 36 36"><path d="M0 0h17v17H0zM19 0h17v17H19zM0 19h17v17H0zM19 19h17v17H19z" fill="url(#gWin)"/></svg></button>
            <label class="task-search">
                <svg class="glass" viewBox="0 0 24 24"><circle cx="11" cy="10" r="8" fill="none" stroke="#222" stroke-width="2.500"/><path d="M16 16l6 6" stroke="#222" stroke-width="3"/></svg>
                <input type="text" placeholder="搜索" aria-label="搜索">
                <svg class="art" viewBox="0 0 62 38"><path d="M0 38V8c6-4 12-3 16 0l4 3h22l5-5c5-4 10-4 15 0v32z" fill="#c8a26a"/><path d="M2 38V14h14l6 8v16zM44 38V18l8-8 10 6v22z" fill="#a87a48"/><path d="M16 12h28v4c-4 2-5 8-5 22h-8V24l-3-4-3 4v14h-7c0-14 1-20-2-22z" fill="#d8b67c"/><path d="M25 38V24c1-6 9-6 10 0v14z" fill="#4f3a28"/><path d="M29 24h3v14h-3z" fill="#cfe4e8"/><path d="M1 5h5v4H1zM9 2h5v4H9zM50 2h6v5h-6zM57 5h4v3h-4z" fill="#e9e2d6"/><path d="M1 4h6v2H1zM9 1h6v2H9zM49 1h8v2h-8z" fill="#c95f3c"/><path d="M40 38c2-6 8-8 12-6l4 6zM57 12c3-1 5 1 5 4v8c-3-2-6-6-5-12z" fill="#5e7a34"/></svg>
            </label>
            <button class="task" aria-label="Task view"><svg viewBox="0 0 36 36"><path d="M9 1h27v24H9z" fill="#f4f4f4"/><path d="M0 10h27v25H0z" fill="#2b2b2b"/><path d="M9 10h18v15H9z" fill="#b5b5b5"/></svg></button>
            <button class="task" aria-label="Weather"><svg viewBox="0 0 36 36"><circle cx="18" cy="18" r="15" fill="#f28a1c"/><path d="M1 13c-3-6 3-10 7-7 3-5 12-1 10 7zM17 33c-4-6 3-10 7-7 3-4 12 1 10 7z" fill="#a9c6f0" stroke="#e6effb"/></svg><span class="temp">25°</span></button>
            <button class="task running" aria-label="Edge"><svg viewBox="0 0 36 36"><path d="M1 20C0 8 8 0 18 0s18 8 18 16c0 7-6 9-10 9-5 0-6-2-4-5 3-6-6-10-11-6-8 6-4 18 6 22C8 36 1 29 1 20z" fill="url(#gEdge)"/><path d="M17 36C6 34 2 20 12 14c-3 6 0 16 10 17 4 0 8-1 10-3-3 5-8 9-15 8z" fill="#0d4f9e"/></svg></button>
            <button class="task running" aria-label="Files"><svg viewBox="0 0 36 36"><path d="M0 3c0-1 1-2 2-2h10l4 4h18l2 2v9H0z" fill="#e0a010"/><path d="M0 9h34l2 2v23H0z" fill="#fbd14b"/><path d="M6 34V25c0-2 1-3 3-3h18c2 0 3 1 3 3v9z" fill="#0f6cbd"/><path d="M10 28h16" stroke="#063f7c" stroke-width="2"/></svg></button>
            <button class="task" aria-label="Store"><svg viewBox="0 0 36 36"><path d="M11 8V1h14v7" fill="none" stroke="#35c0f0" stroke-width="2"/><path d="M1 6h34v25c0 3-2 5-5 5H6c-3 0-5-2-5-5z" fill="#184a86"/><path d="M9 12h8v8H9z" fill="#f25022"/><path d="M19 12h8v8h-8z" fill="#7fba00"/><path d="M9 22h8v8H9z" fill="#00a4ef"/><path d="M19 22h8v8h-8z" fill="#ffb900"/></svg></button>
            <button class="task" aria-label="VirtualBox"><svg viewBox="0 0 36 36"><rect width="36" height="36" rx="6" fill="#1f2226"/><path d="M18 5l11 6v13l-11 7-11-7V11z" fill="#8b98a6"/><path d="M18 5l11 6-11 6-11-6z" fill="#d6dfe8"/><path d="M18 8l5 3-5 3-5-3z" fill="#1f2226"/><path d="M11 14l7 6 7-6M18 20v10" fill="none" stroke="#15181c" stroke-width="5"/><path d="M12 16l6 5 6-5M18 21v8" fill="none" stroke="#2a7ef0" stroke-width="2"/></svg></button>
            <button class="task running" aria-label="Browser"><svg viewBox="0 0 36 36"><path d="M4 14C6 2 24-3 31 7c5 8-6 12-14 14-6 2-4 8 3 8 5 0 9-2 12-5-3 10-17 16-25 8C0 25 8 19 18 16c6-2 6-7 0-7-6-1-11 2-14 5z" fill="#13a7f0"/></svg></button>
            <button class="task" aria-label="Maps"><svg viewBox="0 0 36 36"><circle cx="18" cy="18" r="16" fill="#0a5cf0"/><circle cx="18" cy="14" r="7" fill="#fff"/><path d="M15 18h6v11l-3 2-3-2z" fill="#fff"/><circle cx="18" cy="14" r="3" fill="#0a5cf0"/></svg></button>
            <button class="task" aria-label="App store"><svg viewBox="0 0 36 36"><path d="M3 2h30v27l-6 6H3z" fill="#18d07c"/><path d="M33 25v10H3v-4z" fill="#0fae62"/><path d="M11 11c1 10 13 10 14 0" fill="none" stroke="#fff" stroke-width="3"/></svg></button>
            <button class="task current" aria-label="Automation Studio"><svg><use href="#logo"/></svg></button>
            <button class="task running" aria-label="Paint"><svg viewBox="0 0 36 36"><path d="M20 1c9 0 15 6 14 14-1 6-7 5-8 9-1 5 2 9-4 11C10 36 1 27 2 17 3 8 10 1 20 1z" fill="#27a2dc"/><circle cx="7" cy="20" r="4" fill="#e8502c"/><circle cx="11" cy="10" r="3.500" fill="#45b83c"/><circle cx="22" cy="8" r="3.500" fill="#f4c22c"/><path d="M26 14l3-5 4 5-1 7h-5z" fill="#d9b48a"/><path d="M27 20h5l-1 16h-3z" fill="#a8642e"/></svg></button>
            <div class="tray">
                <svg viewBox="0 0 24 24"><path d="M5 16l7-8 7 8" fill="none" stroke="#222" stroke-width="2.200"/></svg>
                <svg class="assistant" viewBox="0 0 26 26"><rect x="1" y="2" width="23" height="23" rx="5" fill="#2b9cf4"/><rect x="4" y="5" width="19" height="19" rx="4" fill="#67e6f4"/><path d="M8 12v3M18 12v3M9 17c2 3 7 3 9 0" fill="none" stroke="#1563e0" stroke-width="2"/><circle cx="22" cy="4" r="4" fill="#ff4040"/></svg>
                <span class="ime">英</span>
                <span class="ime">拼</span>
                <svg class="wifi" viewBox="0 0 24 24"><path d="M1 9c6-7 16-7 22 0M5 13c4-5 10-5 14 0M8.500 17c2-2 5-2 7 0" fill="none" stroke="#222" stroke-width="2"/><circle cx="12" cy="20" r="2" fill="#222"/></svg>
                <svg viewBox="0 0 24 24"><path d="M2 9h4l6-5v16l-6-5H2z" fill="none" stroke="#222" stroke-width="2"/><path d="M15 8c2 2 2 6 0 8" fill="none" stroke="#222" stroke-width="1.600"/><path d="M18 6c4 3 4 9 0 12M21 3c4 5 4 13 0 18" fill="none" stroke="#aaa" stroke-width="1.500"/></svg>
                <svg class="battery" viewBox="0 0 26 26"><rect x="3" y="6" width="19" height="15" rx="3" fill="none" stroke="#222" stroke-width="2"/><path d="M6 9h13v9H6zM23 11h2v5h-2z" fill="#111"/><path d="M5 0v5H1l1 8 6-8H5z" fill="#111" stroke="#dcdcdc" stroke-width=".5"/></svg>
                <div class="clock">9:46<br>2023/10/12</div>
                <span class="badge">6</span>
                <span class="watermark">CSDN @JHLLHW</span>
            </div>
        </div>
    </div>
</body>
</html>
```
FILE: styles.css
```css
* {
    box-sizing: border-box;
}
body {
    margin: 0;
    background: #efefef;
    color: #000;
    font-family: "Open Sans", "Noto Sans CJK SC", sans-serif;
    font-size: 16px;
}
button {
    margin: 0;
    padding: 0;
    border: none;
    background: none;
    color: inherit;
    font: inherit;
}
h1, h2, h3, p {
    margin: 0;
    font-weight: normal;
}
svg {
    display: block;
    flex: none;
    width: 24px;
    height: 24px;
}
table {
    border-collapse: collapse;
}
th, td {
    padding: 0;
    font-weight: normal;
    text-align: left;
    white-space: nowrap;
}
.sprite {
    position: absolute;
    width: 0;
    height: 0;
}
.app {
    display: flex;
    flex-direction: column;
    height: 100vh;
    overflow: hidden;
}

/* Title and menu */
.titlebar {
    display: flex;
    align-items: center;
    flex: none;
    height: 34px;
    padding-left: 3px;
    background: linear-gradient(90deg, #f0f4f9, #ebf4f5);
}
.titlebar h1 {
    margin-left: 5px;
    font-size: 17px;
    white-space: nowrap;
}
.window-buttons {
    display: flex;
    margin-left: auto;
}
.window-buttons button {
    display: flex;
    justify-content: center;
    width: 70px;
}
.window-buttons svg {
    width: 16px;
    height: 16px;
}
.menubar {
    display: flex;
    align-items: center;
    flex: none;
    gap: 16px;
    height: 34px;
    padding: 0 0 2px 16px;
    background: linear-gradient(90deg, #d9d9d9, #ededed);
}

/* Main toolbars */
.toolbars {
    display: flex;
    flex: none;
    height: 37px;
    padding-bottom: 1px;
    background: linear-gradient(90deg, #d9d9d9, #ededed);
    border-bottom: 1px solid #999;
}
.toolbar, .strip {
    display: flex;
    align-items: center;
    background: linear-gradient(#fff, #fcfcfc 20%, #b9b9b9);
}
.toolbar {
    position: relative;
    padding-left: 9px;
    border-radius: 4px;
}
.toolbar::before {
    content: "";
    position: absolute;
    left: 4px;
    top: 9px;
    height: 18px;
    border-left: 2px dotted #999;
}
.toolbar button, .strip button {
    display: flex;
    align-items: center;
    justify-content: center;
    width: 33px;
    height: 33px;
}
.toolbar .sep {
    width: 8px;
    height: 24px;
    background: linear-gradient(#bbb, #bbb) 4px 0 / 1px 100% no-repeat;
}
.toolbar .more {
    align-items: flex-end;
    width: 15px;
    height: 35px;
    margin-left: 4px;
    padding-bottom: 1px;
    background: linear-gradient(#e8e8e8, #8c8c8c);
    border-radius: 0 4px 4px 0;
}
.toolbar .more svg {
    width: 14px;
    height: 14px;
}
.dim svg {
    opacity: .65;
}
.combo {
    position: relative;
    height: 33px;
    margin: 0 3px;
    align-self: flex-start;
}
.combo select {
    appearance: none;
    width: 143px;
    height: 33px;
    border: 1px solid #fff;
    border-radius: 0;
    background: linear-gradient(#f2f2f2, #bbb) right / 22px 100% no-repeat #fff;
}
.combo::after {
    content: "";
    position: absolute;
    right: 7px;
    top: 15px;
    border: 5px solid transparent;
    border-top-color: #000;
    pointer-events: none;
}

/* Shared panel parts */
.panel-title {
    display: flex;
    align-items: center;
    flex: none;
    gap: 6px;
    height: 33px;
    padding: 0 4px 2px;
    color: #fff;
    background: #b9b9b9;
    border: 1px solid #999;
}
.panel-title h2 {
    flex: 1;
    font-size: 16px;
    white-space: nowrap;
}
.panel-title svg {
    width: 16px;
    height: 16px;
}
.panel-title.focused {
    background: linear-gradient(#09f, #0078d7);
    border-color: #0078d7;
}
.panel-frame {
    flex: 1;
    border: 2px solid #999;
    border-left-width: 1px;
    background: #fff;
}
.tabs {
    display: flex;
    flex: none;
    height: 34px;
    background: #dcdcdc;
}
.tab {
    display: flex;
    flex: none;
    align-items: center;
    gap: 9px;
    height: 32px;
    padding: 0 8px 0 6px;
    color: #6d6d6d;
    background: linear-gradient(#a0a0a0, #a0a0a0) right / 1px 24px no-repeat;
    white-space: nowrap;
}
.logical .tab {
    padding-right: 14px;
    font-size: 17px;
}
.tab svg {
    align-self: flex-start;
    width: 17px;
    height: 17px;
    margin-top: 4px;
}
.tab.active {
    color: #000;
    background: #fff;
    border: 1px solid #999;
    border-top: none;
    border-radius: 0 0 4px 4px;
}
.tab.last {
    background: none;
}
.vscroll {
    flex: none;
    background: #efefef;
}
.hscroll {
    background: #efefef;
}
.vscroll i, .hscroll i {
    display: block;
    background: #868686;
}

/* Upper row */
.workspace {
    display: flex;
    flex: 1;
    min-height: 0;
    padding-bottom: 4px;
    background: linear-gradient(90deg, #dcdcdc, #efefef);
}
.logical {
    display: flex;
    flex-direction: column;
    flex: none;
    width: 583px;
}
.logical .panel-frame {
    padding: 1px 3px 3px 4px;
}
.strip {
    flex: none;
    height: 36px;
}
.strip .on {
    background: #cce4f7;
    border: 1px solid #0078d7;
}
.tree {
    width: 100%;
    font: 16px/20px "Liberation Sans", sans-serif;
}
.tree th {
    height: 24px;
}
.tree th:first-child {
    width: 176px;
    border-right: 1px solid #e4e4e4;
}
.tree td:last-child, .tree th:last-child {
    padding-left: 3px;
}
.node {
    display: flex;
    align-items: center;
    height: 20px;
    padding-left: 29px;
}
.node.root {
    padding-left: 5px;
}
.node .box {
    flex: none;
    width: 9px;
    height: 9px;
    border: 1px solid #777;
    background: linear-gradient(#000, #000) center / 5px 1px no-repeat, linear-gradient(#000, #000) center / 1px 5px no-repeat;
}
.node .box.minus {
    background: linear-gradient(#000, #000) center / 5px 1px no-repeat;
}
.node .dots {
    width: 9px;
    border-top: 1px dotted #777;
}
.node svg {
    width: 18px;
    height: 18px;
    margin: 0 9px 0 5px;
}
.node.root svg {
    margin: 0 5px 0 14px;
}
.node .editing {
    flex: 1;
    height: 20px;
    padding-left: 2px;
    line-height: 17px;
    border: 2px solid #000;
}

.designer {
    display: flex;
    flex-direction: column;
    flex: 1;
    min-width: 0;
    margin: 2px 4px 0 6px;
    border: 1px solid #999;
    border-right-width: 2px;
    border-bottom-width: 2px;
    border-top: none;
    background: #efefef;
}
.doc-tabs {
    display: flex;
    align-items: center;
    justify-content: space-between;
    height: 31px;
    padding-right: 4px;
}
.doc-tab {
    display: flex;
    align-items: center;
    height: 31px;
    padding: 0 6px 0 5px;
    font-weight: bold;
    font-size: 16px;
    background: #fff;
    border: 1px solid #999;
    border-bottom: none;
    border-left: none;
    border-radius: 4px 4px 0 0;
}
.doc-tab .doc-close {
    width: 18px;
    height: 18px;
    margin-left: 16px;
}
.doc-menu {
    width: 18px;
    height: 18px;
    color: #444;
}
.canvas-area {
    display: grid;
    grid-template: 1fr 28px / 1fr 26px;
    flex: 1;
    border-top: 2px solid #777;
}
.canvas {
    display: flex;
    flex-direction: column;
    justify-content: space-between;
    padding: 25px 0 0 26px;
    background: #fff;
}
.plc {
    width: 150px;
    height: 100px;
}
.zoomfit {
    align-self: flex-end;
    width: 18px;
    height: 18px;
}
.canvas-area .vscroll {
    padding: 35px 9px 43px 6px;
}
.canvas-area .vscroll i {
    height: 100%;
}
.canvas-area .hscroll {
    padding: 7px 462px 0 34px;
}
.canvas-area .hscroll i {
    height: 11px;
}

/* Toolbox */
.toolbox {
    display: flex;
    flex-direction: column;
    flex: none;
    width: 218px;
    background: #efefef;
    font: 15px/18px "Liberation Mono", monospace;
}
.toolbox .panel-title {
    font-family: "Open Sans", sans-serif;
}
.toolbox-bar {
    display: flex;
    align-items: center;
    flex: none;
    height: 34px;
    padding: 1px 3px 0 12px;
    background: #f6f6f6;
}
.view-mode {
    padding-right: 6px;
    border-right: 1px solid #999;
}
.view-mode svg {
    width: 26px;
    height: 18px;
}
.filter svg {
    width: 18px;
    height: 18px;
    margin: 0 3px 0 5px;
}
.search {
    display: flex;
    align-items: center;
    flex: 1;
    height: 32px;
    padding: 0 12px 0 9px;
    background: #fff;
    border: 1px solid #ddd;
}
.search input {
    width: 100%;
    min-width: 0;
    padding: 0;
    border: none;
    outline: none;
    background: none;
    font: 15px "Liberation Mono", monospace;
}
.search input::placeholder {
    color: #888;
}
.search svg {
    width: 15px;
    height: 15px;
}
.scroll-row {
    display: flex;
    overflow: hidden;
}
.scroll-row .vscroll {
    width: 25px;
    padding: 0 7px;
}
.categories {
    flex: none;
    height: 525px;
    border-bottom: 4px solid #a0a0a0;
}
.categories .vscroll {
    padding-top: 28px;
}
.categories .vscroll i {
    height: 114px;
}
.cat-list {
    flex: 1;
    min-width: 0;
    background: #fcfcfc;
}
.cat-list h3 {
    display: flex;
    align-items: center;
    height: 33px;
    padding: 0 11px 0 12px;
    color: #039;
    font-family: "Open Sans", sans-serif;
    font-size: 18px;
    white-space: nowrap;
}
.cat-list .ruled::after {
    content: "";
    flex: 1;
    height: 1px;
    margin-left: 5px;
    background: #a8bbd8;
}
.item {
    display: block;
    width: 94px;
    height: 96px;
    margin-left: 12px;
    text-align: center;
}
.item span {
    display: flex;
    align-items: center;
    justify-content: center;
    gap: 3px;
    height: 36px;
}
.item input {
    appearance: none;
    width: 20px;
    height: 20px;
    margin: 0;
    background: #f3f3f3;
    border: 1px solid #555;
    border-radius: 4px;
}
.item svg {
    width: 32px;
    height: 32px;
}
.objects {
    flex: 1;
    background: #fff;
}
.objects .vscroll {
    padding-top: 26px;
}
.objects .vscroll i {
    height: 51px;
}
.object-list {
    flex: 1;
    align-self: flex-start;
    table-layout: fixed;
    width: 193px;
    line-height: 22px;
}
.object-list th {
    height: 24px;
}
.object-list th:first-child {
    width: 160px;
    padding-left: 6px;
    border-right: 1px solid #ddd;
}
.object-list th:last-child, .object-list td:last-child {
    padding-left: 6px;
    overflow: hidden;
}
.object-list td {
    height: 22px;
}
.object-list td svg {
    float: left;
    width: 16px;
    height: 16px;
    margin: 3px 2px 0 4px;
}
.toolbox > .hscroll {
    flex: none;
    height: 24px;
    padding: 6px 0 0 26px;
}
.toolbox > .hscroll i {
    width: 56px;
    height: 11px;
}

/* Lower row */
.lower {
    display: grid;
    grid-template-columns: minmax(0, 1fr) minmax(0, 1fr);
    gap: 4px;
    flex: none;
    height: 419px;
    background: #dcdcdc;
}
.callstack, .properties {
    display: flex;
    flex-direction: column;
}
.callstack .panel-frame {
    display: flex;
    padding: 3px;
    background: #e6e6e6;
}
.grid-box {
    flex: 1;
    border: 1px solid #828790;
    background: #fff;
}
.calls {
    font: 16px/28px "Liberation Sans", sans-serif;
}
.calls th {
    padding-left: 7px;
    border-right: 1px solid #ddd;
}
.calls th:nth-child(1) {
    width: 84px;
}
.calls th:nth-child(2) {
    width: 105px;
}
.calls th:nth-child(3) {
    width: 21px;
}
.properties {
    background: #fff;
}
.properties p {
    padding-top: 51px;
    color: #a5a5a5;
    font: 15px/22px "Liberation Mono", monospace;
    text-align: center;
}

/* Status bar */
.statusbar {
    display: flex;
    flex: none;
    height: 32px;
    padding: 2px 0;
    line-height: 28px;
    background: #efefef;
    border-bottom: 2px solid #b0b0b0;
}
.statusbar span {
    border-right: 1px solid #cfcfcf;
    white-space: nowrap;
}
.statusbar .hint {
    flex: 1;
    padding-left: 4px;
}
.c86 {
    width: 86px;
}
.conn {
    width: 589px;
    padding-left: 4px;
    font-size: 17px;
}
.state {
    width: 99px;
    padding-right: 2px;
    text-align: right;
}
.c100 {
    width: 101px;
}
.c6 {
    width: 6px;
}
.c40 {
    width: 40px;
}
.c50 {
    width: 49px;
}
.rest {
    width: 187px;
}

/* Taskbar */
.taskbar {
    display: flex;
    align-items: center;
    flex: none;
    height: 70px;
    padding: 0 0 2px 15px;
    background: linear-gradient(90deg, #ced8dc, #d3dcdf 38%, #deefee 46%, #d8dcdf 54%, #d9dadc 62%, #e0dcd6 74%, #dadada 80%, #dadada);
}
.task {
    position: relative;
    display: flex;
    flex: none;
    align-items: center;
    justify-content: center;
    width: 66px;
    height: 58px;
}
.task svg {
    width: 36px;
    height: 36px;
}
.task.running::after, .task.current::after {
    content: "";
    position: absolute;
    left: 29px;
    bottom: 0;
    width: 8px;
    height: 5px;
    border-radius: 3px;
    background: #7b7f82;
}
.task.current {
    width: 56px;
    margin: 0 5px;
    background: #ebf0f2;
    border-radius: 6px;
    box-shadow: 0 0 2px #aaa;
}
.task.current::after {
    left: 16px;
    width: 24px;
    background: #0078d7;
}
.temp {
    position: absolute;
    left: 28px;
    top: 3px;
    width: 34px;
    height: 24px;
    border-radius: 12px;
    background: #f6f6f6;
    font-size: 15px;
    line-height: 24px;
    text-align: center;
}
.task-search {
    display: flex;
    align-items: center;
    width: 325px;
    height: 47px;
    margin: 0 6px;
    padding-left: 15px;
    background: #f3f6f7;
    border: 1px solid #b9c1c5;
    border-radius: 24px;
    overflow: hidden;
}
.task-search .glass {
    margin-right: 15px;
}
.task-search input {
    flex: 1;
    min-width: 0;
    padding: 0;
    border: none;
    outline: none;
    background: none;
    font: 21px "Noto Sans CJK SC", sans-serif;
}
.task-search input::placeholder {
    color: #555;
}
.task-search .art {
    width: 62px;
    height: 38px;
}
.tray {
    position: relative;
    display: flex;
    align-items: center;
    margin-left: auto;
    padding-right: 30px;
}
.assistant, .battery {
    width: 26px;
    height: 26px;
}
.assistant {
    margin: 0 6px 0 22px;
}
.ime {
    width: 58px;
    font-size: 22px;
    text-align: center;
}
.wifi {
    margin: 0 12px 0 16px;
}
.battery {
    margin: 0 4px 0 12px;
}
.clock {
    width: 112px;
    margin-right: 12px;
    line-height: 24px;
    text-align: right;
}
.badge {
    width: 24px;
    height: 24px;
    border-radius: 12px;
    background: #0078d4;
    color: #fff;
    font-size: 14px;
    line-height: 24px;
    text-align: center;
}
.watermark {
    position: absolute;
    right: 14px;
    bottom: -8px;
    color: #8c8c8c;
    font: 12px "Liberation Sans", sans-serif;
}
```
